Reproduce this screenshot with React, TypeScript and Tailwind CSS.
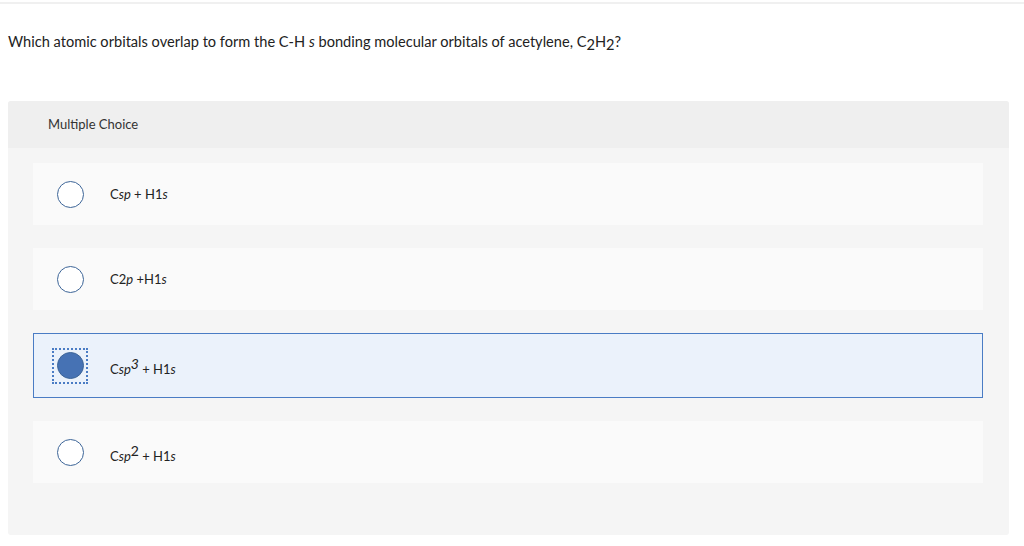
import React, { useState } from 'react';

const options = [
  { id: 'a', pad: 'pt-[2px]', label: (<><span>C</span><i>sp</i><span> + H1</span><i>s</i></>) },
  { id: 'b', pad: 'pt-[2px]', label: (<><span>C2</span><i>p</i><span> +H1</span><i>s</i></>) },
  { id: 'c', pad: 'pt-[9px]', label: (<><span>C</span><i>sp</i><sup className="text-[14px] leading-none italic relative -top-[5px] align-baseline">3</sup><span> + H1</span><i>s</i></>) },
  { id: 'd', pad: 'pt-[9px]', label: (<><span>C</span><i>sp</i><sup className="text-[14px] leading-none relative -top-[5px] align-baseline">2</sup><span> + H1</span><i>s</i></>) },
];

export default function App() {
  const [selected, setSelected] = useState('c');

  return (
    <div className="w-[1024px] h-[546px] bg-white text-[#222] overflow-hidden" style={{ fontFamily: 'Lato, "Open Sans", sans-serif' }}>
      <div className="h-[2px]" />
      <div className="h-[2px] bg-[#f0f0f0]" />

      {/* Question */}
      <div className="px-[8px] pt-[28px] h-[97px]">
        <p className="text-[14.6px] leading-[20px] text-[#222]">
          Which atomic orbitals overlap to form the C-H <i>s</i> bonding molecular orbitals of acetylene, C
          <sub className="text-[14.6px] leading-none relative top-[3px] align-baseline">2</sub>H
          <sub className="text-[14.6px] leading-none relative top-[3px] align-baseline">2</sub>?
        </p>
      </div>

      {/* Panel */}
      <div className="mx-[8px] w-[1001px] rounded-[3px] bg-[#f5f5f5] overflow-hidden">
        <div className="h-[47px] bg-[#efefef] flex items-center px-[40px]">
          <span className="text-[13px] text-[#333]">Multiple Choice</span>
        </div>

        <div className="px-[25px] pt-[15px] pb-[52px] flex flex-col gap-[23px]">
          {options.map((opt) => {
            const isActive = selected === opt.id;
            return (
              <button
                key={opt.id}
                onClick={() => setSelected(opt.id)}
                className={`w-[950px] flex items-center text-left border ${
                  isActive ? 'h-[65px] bg-[#ebf2fb] border-[#4a7cc4]' : 'h-[62px] bg-[#fafafa] border-transparent'
                }`}
              >
                <div className="w-[70px] pl-[18px] flex items-center">
                  <div
                    className={`w-[36px] h-[36px] flex items-center justify-center ${
                      isActive ? 'border-[2px] border-dotted border-[#4a7cc4]' : 'border-[2px] border-transparent'
                    }`}
                  >
                    <div
                      className={`w-[27px] h-[27px] rounded-full border ${
                        isActive ? 'bg-[#4672b4] border-[#3d6598]' : 'bg-white border-[#3d6598]'
                      }`}
                    />
                  </div>
                </div>
                <span className={`pl-[6px] ${opt.pad} text-[13px] text-[#222]`}>{opt.label}</span>
              </button>
            );
          })}
        </div>
      </div>
    </div>
  );
}
